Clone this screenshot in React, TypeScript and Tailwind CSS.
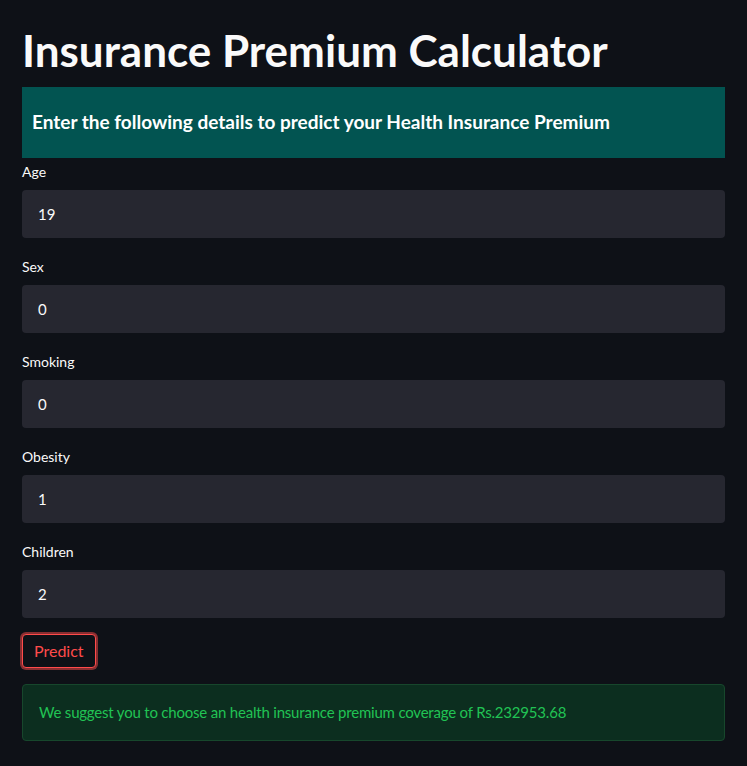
const fields = [
  { label: "Age", value: "19" },
  { label: "Sex", value: "0" },
  { label: "Smoking", value: "0" },
  { label: "Obesity", value: "1" },
  { label: "Children", value: "2" },
];

export default function App() {
  return (
    <div
      className="min-h-screen bg-[#0e1117] text-[#fafafa] px-[22px] pt-[24px] pb-6"
      style={{ fontFamily: "Lato, 'Noto Sans', sans-serif" }}
    >
      <h1 className="text-[44px] font-bold leading-[52px] mb-[11px] tracking-[0px]">
        Insurance Premium Calculator
      </h1>

      <div className="bg-[#025451] h-[71px] flex items-center px-[10px]">
        <h2 className="text-[19px] font-bold text-white">
          Enter the following details to predict your Health Insurance Premium
        </h2>
      </div>

      <div className="flex flex-col gap-[18px] mt-[3px]">
        {fields.map((f) => (
          <div key={f.label} className="flex flex-col">
            <label className="text-[14px] h-[29px] pt-[1px] leading-[20px] text-[#fafafa]">{f.label}</label>
            <div className="h-[48px] bg-[#262730] rounded-[4px] flex items-center px-[16px] text-[15px]">
              {f.value}
            </div>
          </div>
        ))}
      </div>

      <div className="mt-[16px]">
        <button className="h-[34px] px-[11px] rounded-[4px] border border-[#ff4b4b] text-[#ff4b4b] text-[16px] ring-[2px] ring-[#ff4b4b]/50 bg-[#0e1117]">
          Predict
        </button>
      </div>

      <div className="mt-[16px] h-[57px] flex items-center px-[16px] bg-[#0c2e1f] border border-[#17472c] rounded-[4px] text-[#21c354] text-[15px] tracking-[-0.2px]">
        We suggest you to choose an health insurance premium coverage of Rs.232953.68
      </div>
    </div>
  );
}
